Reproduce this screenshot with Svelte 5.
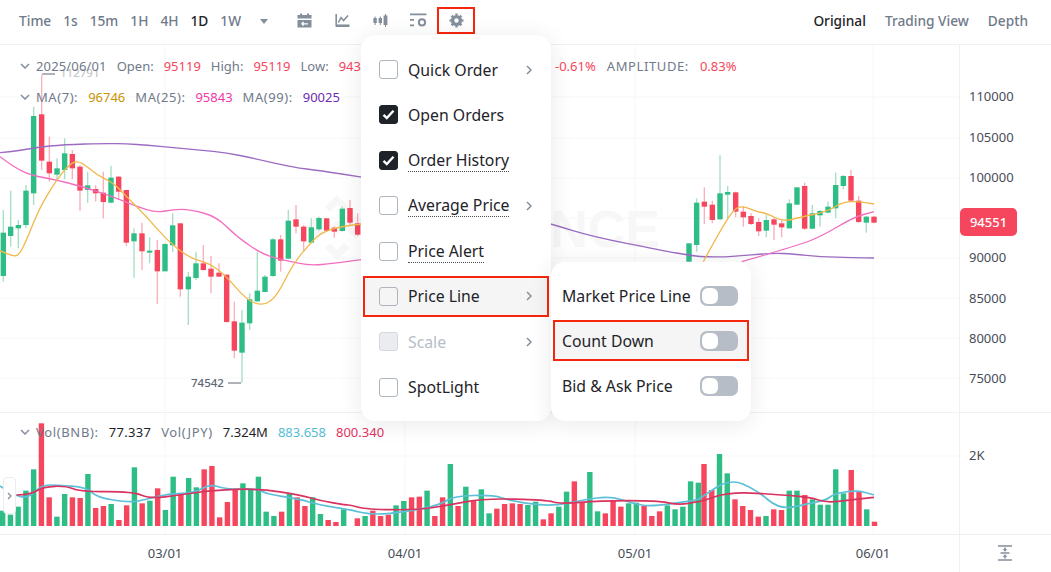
<script>
  // Smooth a polyline through its points with quadratic midpoints.
  const smooth = (pts, ox = 0, oy = 0) => {
    const p = pts.map(([x, y]) => [x / 3 + ox, y / 3 + oy]);
    let d = `M${p[0][0].toFixed(1)} ${p[0][1].toFixed(1)}`;
    for (let i = 1; i < p.length - 1; i++) {
      const mx = (p[i][0] + p[i + 1][0]) / 2;
      const my = (p[i][1] + p[i + 1][1]) / 2;
      d += ` Q${p[i][0].toFixed(1)} ${p[i][1].toFixed(1)} ${mx.toFixed(1)} ${my.toFixed(1)}`;
    }
    const l = p[p.length - 1];
    return d + ` L${l[0].toFixed(1)} ${l[1].toFixed(1)}`;
  };

  const leftCandles = [
    [10,330,545,398,528,'g'],[32,272,440,380,408,'g'],[55,360,445,375,385,'g'],[78,255,385,272,375,'g'],
    [101,20,315,48,280,'g'],[125,-75,210,43,182,'r'],[148,110,245,185,220,'r'],[171,175,240,205,224,'g'],
    [194,115,238,160,210,'g'],[217,150,238,162,205,'r'],[240,195,332,200,272,'r'],[263,215,308,256,270,'g'],
    [287,255,305,267,280,'r'],[310,215,355,278,306,'r'],[333,197,310,233,308,'g'],[356,228,300,230,275,'r'],
    [379,270,438,270,428,'r'],[402,385,533,400,424,'g'],[426,368,510,400,454,'r'],[449,412,490,452,458,'g'],
    [472,420,612,450,514,'r'],[495,430,514,432,514,'g'],[518,340,456,376,436,'g'],[541,370,590,370,568,'r'],
    [565,516,675,530,568,'g'],[588,455,540,490,534,'g'],[610,435,512,490,510,'r'],[633,468,580,506,530,'r'],
    [657,490,530,518,530,'r'],[680,524,668,524,666,'r'],[703,605,775,664,752,'r'],[726,630,848,668,758,'g'],
    [749,580,690,598,670,'g'],[772,455,606,572,604,'g'],[795,525,577,530,576,'g'],[819,415,530,418,528,'g'],
    [842,405,515,418,482,'r'],[865,330,478,362,476,'g'],[888,315,400,358,380,'r'],[911,375,455,380,424,'r'],
    [934,355,430,382,428,'g'],[957,350,392,354,388,'g'],[980,355,395,355,392,'r'],[1003,380,413,383,395,'r'],
    [1027,320,395,326,393,'g'],[1050,300,375,324,368,'r'],[1073,340,408,370,404,'r']
  ];
  const rightCandles = [
    [27,340,395,340,395,'g'],[50,205,365,218,345,'g'],[73,172,282,215,230,'r'],[97,212,280,224,270,'r'],
    [120,76,270,190,268,'g'],[143,168,268,186,194,'g'],[167,185,262,187,245,'r'],[190,228,290,245,262,'r'],
    [213,250,285,258,282,'r'],[236,265,318,276,304,'r'],[259,255,322,270,302,'g'],[282,262,330,268,284,'r'],
    [305,270,322,280,292,'r'],[328,208,295,220,295,'g'],[351,172,225,172,224,'g'],[374,158,300,168,296,'r'],
    [397,225,298,250,296,'g'],[420,240,290,243,256,'g'],[444,215,250,230,248,'g'],[467,128,265,165,235,'g'],
    [490,135,178,138,168,'g'],[513,120,212,138,212,'r'],[536,198,278,212,276,'r'],[559,258,308,260,278,'g'],
    [582,258,280,260,278,'r']
  ];
  const mapCandle = (ox, oy) => ([x, wt, wb, bt, bb, c]) => ({
    x: x / 3 + ox, wt: wt / 3 + oy, wb: wb / 3 + oy, bt: bt / 3 + oy, h: Math.max(2, (bb - bt) / 3), c
  });
  const candles = [...leftCandles.map(mapCandle(0, 100)), ...rightCandles.map(mapCandle(680, 130))];

  const page = (pts) => pts.map(([x, y]) => [x * 3, y * 3]);
  const purple = [
    smooth([[0,158],[60,152],[110,142],[190,134],[320,130],[380,132],[440,135],[520,143],[600,150],[680,158],[760,175],[880,202],[960,212],[1090,232]], 0, 100),
    smooth(page([[540,221],[551,224],[593,236.7],[660,250],[693,256],[707,257],[730,256.7],[773,253],[793,254],[820,256.7],[853,257.7],[874,258]]))
  ];
  const pink = [
    smooth([[0,170],[40,200],[90,225],[170,240],[240,258],[340,290],[410,320],[470,338],[520,328],[570,328],[650,350],[710,410],[790,465],[860,482],[930,497],[1000,490],[1090,478]], 0, 100),
    smooth([[185,395],[340,350],[420,322],[520,262],[582,245]], 680, 130)
  ];
  const yellow = [
    smooth([[0,452],[30,465],[55,470],[80,420],[120,320],[170,240],[210,190],[240,182],[290,225],[340,248],[380,290],[440,350],[500,420],[570,475],[630,490],[680,530],[740,600],[790,618],[830,590],[880,490],[940,420],[970,395],[1030,378],[1090,372]], 0, 100),
    smooth([[70,395],[130,285],[165,235],[190,228],[230,245],[260,250],[310,275],[360,262],[440,245],[490,215],[540,215],[582,222]], 680, 130)
  ];

  // Positive top = green bar, negative = red; values are read at 3x from y=410.
  const v1 = [302,314,290,242,178,-40,-262,320,252,-262,-264,192,-294,-288,282,-330,-286,172,-280,272,-235,300,200,-250,204,232,-178,-168,-322,-276,-240,220,240,200,305,318,-305,250,-262,-288,262,312,-330,-336,298];
  const v2 = [-325,318,-302,-318,-314,286,273,-262,-260,242,-318,-262,162,-288,230,-270,238,310,-296,-282,-280,-282,285,275,-328,-310,290,245,-214,-276,186,304,-310,-270,-290,280,278,-288,-318,-304,286,298,290,214,218];
  const v3 = [-162,-240,132,190,-268,-288,-300,-320,318,-298,-300,242,242,-255,268,284,284,178,250,-180,-245,298,-335];
  const bar = (base, ox) => (v, i) => {
    const t = Math.abs(v);
    return { x: (base + 23.25 * i) / 3 + ox - 2.7, y: 410 + t / 3, h: (348 - t) / 3, c: v < 0 ? 'r' : 'g' };
  };
  const bars = [...v1.map(bar(8, 0)), ...v2.map(bar(22, 350)), ...v3.map(bar(12, 700))];

  const vBlue = smooth([
    ...[[0,228],[40,255],[85,265],[125,225],[170,225],[260,232],[290,262],[390,278],[440,268],[510,250],[580,250],[630,222],[680,238],[770,236],[800,252],[900,268],[960,285],[1040,298]],
    ...[[0,300],[70,315],[170,305],[270,285],[310,258],[430,255],[480,272],[600,290],[700,270],[780,258],[850,280],[900,290],[1040,270]].map(([x, y]) => [x + 1050, y]),
    ...[[0,265],[90,205],[170,240],[240,300],[330,280],[380,270],[400,252],[470,240],[522,255]].map(([x, y]) => [x + 2100, y])
  ], 0, 410);
  const vRed = smooth([
    ...[[50,255],[90,255],[130,230],[200,228],[240,245],[400,245],[450,266],[540,255],[640,240],[780,236],[900,255],[960,272],[1040,285]],
    ...[[0,285],[50,298],[200,300],[300,285],[400,265],[590,270],[630,282],[750,272],[920,272],[990,285],[1040,275]].map(([x, y]) => [x + 1050, y]),
    ...[[0,275],[90,245],[250,255],[330,262],[380,278],[450,270],[522,262]].map(([x, y]) => [x + 2100, y])
  ], 0, 410);

  const gridY = [97, 138, 178, 218, 258, 298, 338, 378];
  const gridX = [165, 405, 635, 873];
  const ticks = [
    { y: 96, t: '110000' }, { y: 137, t: '105000' }, { y: 177, t: '100000' }, { y: 257, t: '90000' },
    { y: 298, t: '85000' }, { y: 338, t: '80000' }, { y: 378, t: '75000' }
  ];
  const times = [
    { x: 165, t: '03/01' }, { x: 405, t: '04/01' }, { x: 635, t: '05/01' }, { x: 873, t: '06/01' }
  ];
  const intervals = ['1s', '15m', '1H', '4H', '1D', '1W'];
  const menu = [
    { t: 'Quick Order', arrow: true },
    { t: 'Open Orders', on: true },
    { t: 'Order History', on: true, dot: true },
    { t: 'Average Price', arrow: true, dot: true },
    { t: 'Price Alert', dot: true },
    { t: 'Price Line', arrow: true, mark: true },
    { t: 'Scale', arrow: true, off: true },
    { t: 'SpotLight' }
  ];
  const sub = [{ t: 'Market Price Line' }, { t: 'Count Down', mark: true }, { t: 'Bid & Ask Price' }];
</script>

<div class="app">
  <header class="toolbar">
    <span class="tab">Time</span>
    {#each intervals as iv}
      <span class="tab" class:active={iv === '1D'}>{iv}</span>
    {/each}
    <svg class="caret" width="8" height="5" viewBox="0 0 8 5"><path d="M0 0h8L4 5z" /></svg>
    <div class="tools">
      <span class="tool">
        <svg width="15" height="15" viewBox="0 0 15 15"><path d="M3 0.5h2v1.5h5V0.5h2V2h2.5v3.5H.5V2H3z M.5 7h14v7.5H.5z" /><path class="cut" d="M11 10.8H5M6.6 9 4.8 10.8 6.6 12.6" /></svg>
      </span>
      <span class="tool">
        <svg width="15" height="15" viewBox="0 0 15 15"><path class="ln" d="M1.2 1v11.6H14" /><path class="ln" d="M3.4 9.5 6 4.6 8.6 7.6 13 2.4" /><path d="M1 11.6h13.5v2.4H1z" /></svg>
      </span>
      <span class="tool">
        <svg width="16" height="13" viewBox="0 0 16 13"><path d="M1.4 4h3.4v5H1.4zM2.6 2.5h1V11h-1zM6.6 4h3.4v5H6.6zM7.8 2.5h1V11h-1zM11.6 1.5h3.8v9.5h-3.8zM13 0h1v13h-1z" /></svg>
      </span>
      <span class="tool">
        <svg width="17" height="15" viewBox="0 0 17 15"><path d="M0 0.5h16.5v1.8H0zM0 6h4v1.8H0zM0 11.5h4v1.8H0z" /><circle class="ring" cx="12" cy="9.4" r="3.1" /></svg>
      </span>
      <span class="tool gear">
        <svg width="15" height="15" viewBox="0 0 15 15"><circle class="gear-body" cx="7.5" cy="7.5" r="3.9" /><circle class="gear-teeth" cx="7.5" cy="7.5" r="6.1" pathLength="48" /></svg>
      </span>
    </div>
    <nav class="views">
      <span class="tab active">Original</span>
      <span class="tab">Trading View</span>
      <span class="tab">Depth</span>
    </nav>
  </header>

  <section class="row main-row">
    <div class="plot">
      <svg class="canvas" width="959" height="367" viewBox="0 45 959 367">
        {#each gridY as y}<line class="grid" x1="0" x2="959" y1={y} y2={y} />{/each}
        {#each gridX as x}<line class="grid" x1={x} x2={x} y1="45" y2="412" />{/each}
        <g class="mark">
          <path d="M337 195l12 12-5 5-7-7-7 7-5-5zM337 260l12-12-5-5-7 7-7-7-5 5zM318 215l12 12-12 12-12-12zM356 215l12 12-12 12-12-12zM337 220l7 7-7 7-7-7z" />
          <text x="660" y="247" text-anchor="end">BINANCE</text>
        </g>
        {#each candles as c}
          <line class={c.c === 'g' ? 'wick-g' : 'wick-r'} x1={c.x} x2={c.x} y1={c.wt} y2={c.wb} />
          <rect class={c.c === 'g' ? 'up' : 'down'} x={c.x - 2.7} y={c.bt} width="5.4" height={c.h} />
        {/each}
        {#each purple as d}<path class="ma ma99" {d} />{/each}
        {#each pink as d}<path class="ma ma25" {d} />{/each}
        {#each yellow as d}<path class="ma ma7" {d} />{/each}
        <line class="ext" x1="42" x2="55" y1="74" y2="74" />
        <line class="ext" x1="228" x2="241" y1="383" y2="383" />
      </svg>
      <span class="extreme high">112791</span>
      <span class="extreme low">74542</span>
      <div class="legend first">
        <svg class="chev" width="10" height="6" viewBox="0 0 10 6"><path d="M1 1l4 4 4-4" /></svg>
        <span class="date">2025/06/01</span><span>Open:</span><b class="red">95119</b><span>High:</span><b class="red">95119</b><span>Low:</span><b class="red">94319</b>
      </div>
      <div class="legend second">
        <svg class="chev" width="10" height="6" viewBox="0 0 10 6"><path d="M1 1l4 4 4-4" /></svg>
        <span class="wide">MA(7):</span><b class="c7">96746</b><span class="wide">MA(25):</span><b class="c25">95843</b><span class="wide">MA(99):</span><b class="c99">90025</b>
      </div>
      <div class="legend third">
        <b class="red">-0.61%</b><span class="amp">AMPLITUDE:</span><b class="red">0.83%</b>
      </div>
    </div>
    <aside class="axis">
      {#each ticks as tick}
        <span class="tick" style="top:{tick.y - 45 - 9}px">{tick.t}</span>
      {/each}
      <span class="price-tag">94551</span>
    </aside>
  </section>

  <section class="row vol-row">
    <div class="plot">
      <svg class="canvas" width="959" height="121" viewBox="0 413 959 121">
        <line class="grid" x1="0" x2="959" y1="456" y2="456" />
        {#each gridX as x}<line class="grid" x1={x} x2={x} y1="413" y2="534" />{/each}
        {#each bars as b}
          <rect class={b.c === 'g' ? 'up' : 'down'} x={b.x} y={b.y} width="5.4" height={b.h} />
        {/each}
        <path class="ma vblue" d={vBlue} />
        <path class="ma vred" d={vRed} />
      </svg>
      <div class="legend vol">
        <svg class="chev" width="10" height="6" viewBox="0 0 10 6"><path d="M1 1l4 4 4-4" /></svg>
        <span class="wider">Vol(BNB):</span><b class="ink vnum">77.337</b><span class="wider">Vol(JPY)</span><b class="ink">7.324M</b><b class="cyan">883.658</b><b class="crim">800.340</b>
      </div>
      <div class="handle">
        <svg width="5" height="8" viewBox="0 0 5 8"><path d="M1 1l3 3-3 3" /></svg>
      </div>
    </div>
    <aside class="axis">
      <span class="tick" style="top:{455 - 413 - 9}px">2K</span>
    </aside>
  </section>

  <footer class="row time-row">
    <div class="times">
      {#each times as t}
        <span class="time" style="left:{t.x}px">{t.t}</span>
      {/each}
    </div>
    <div class="fit">
      <svg width="16" height="16" viewBox="0 0 16 16"><path class="fit-ln" d="M1 1h14M1 15h14M3.5 8h9" /><path d="M8 6.8 5.6 4.2h1.6V2.4h1.6v1.8h1.6zM8 9.2l2.4 2.6H8.8v1.8H7.2v-1.8H5.6z" /></svg>
    </div>
  </footer>

  <div class="menu">
    {#each menu as m}
      <div class="item" class:marked={m.mark} class:off={m.off}>
        <span class="box" class:on={m.on} class:box-off={m.off}>
          {#if m.on}<svg width="13" height="11" viewBox="0 0 13 11"><path d="M1.5 5.8 4.8 9 11.5 1.8" /></svg>{/if}
        </span>
        <span class="label" class:dotted={m.dot}>{m.t}</span>
        {#if m.arrow}
          <svg class="arrow" width="6" height="10" viewBox="0 0 6 10"><path d="M1 1l4 4-4 4" /></svg>
        {/if}
      </div>
    {/each}
  </div>

  <div class="submenu">
    {#each sub as s}
      <div class="item sub-item" class:marked={s.mark}>
        <span class="label">{s.t}</span>
        <span class="toggle"><span class="knob"></span></span>
      </div>
    {/each}
  </div>
</div>

<style>
  :global(body) { margin: 0; background: #fff; }
  .app {
    position: relative;
    width: 1051px;
    height: 572px;
    overflow: hidden;
    display: flex;
    flex-direction: column;
    background: #fff;
    font-family: "Noto Sans", "Open Sans", sans-serif;
    color: #1e2329;
  }

  .toolbar {
    display: flex;
    align-items: center;
    gap: 12px;
    height: 45px;
    flex: none;
    padding: 0 23px 3px 19px;
    box-sizing: border-box;
    border-bottom: 1px solid #eef0f2;
  }
  .tab { font-size: 13.7px; font-weight: 500; color: #707a8a; white-space: nowrap; line-height: 20px; }
  .tab.active { color: #1e2329; }
  .caret { margin-left: 7px; fill: #848e9c; margin-top: 2px; }
  .tools { display: flex; align-items: center; margin-left: 5px; }
  .tool { width: 38px; height: 27px; box-sizing: border-box; display: flex; align-items: center; justify-content: center; }
  .tool svg { fill: #848e9c; }
  .tool.gear { border: 2px solid #f5260c; }
  .cut { fill: none; stroke: #fff; stroke-width: 1.3; }
  .ln { fill: none; stroke: #848e9c; stroke-width: 1.6; }
  .ring { fill: none; stroke: #848e9c; stroke-width: 2; }
  .gear-body { fill: none; stroke: #848e9c; stroke-width: 3.4; }
  .gear-teeth { fill: none; stroke: #848e9c; stroke-width: 1.8; stroke-dasharray: 3 3; stroke-dashoffset: 1.5; }
  .views { margin-left: auto; display: flex; gap: 19px; }

  .row { display: flex; flex: none; }
  .main-row { height: 368px; border-bottom: 1px solid #f0f1f2; box-sizing: border-box; }
  .vol-row { height: 122px; border-bottom: 1px solid #eef0f2; box-sizing: border-box; }
  .time-row { height: 37px; }
  .plot { position: relative; width: 959px; flex: none; overflow: hidden; }
  .canvas { display: block; filter: blur(0.5px); }
  .axis { position: relative; flex: 1; border-left: 1px solid #eef0f2; }
  .tick { position: absolute; left: 9px; font-size: 13px; line-height: 18px; color: #474d57; }
  .price-tag {
    position: absolute;
    top: 163px;
    left: 0;
    width: 57px;
    height: 28px;
    border-radius: 5px;
    background: #f6465d;
    color: #fff;
    font-size: 13px;
    font-weight: 500;
    line-height: 28px;
    text-align: center;
  }

  .grid { stroke: #f6f7f8; stroke-width: 1; }
  .mark { fill: #f7f7f8; }
  .mark text { font-family: "Liberation Sans", sans-serif; font-weight: 700; font-size: 52px; }
  .up { fill: #2ebd85; }
  .down { fill: #f6465d; }
  .wick-g { stroke: #a8dfc6; stroke-width: 1.4; }
  .wick-r { stroke: #fbb1bb; stroke-width: 1.4; }
  .ma { fill: none; stroke-width: 1.3; }
  .ma7 { stroke: #f0b94a; }
  .ma25 { stroke: #f26fc0; }
  .ma99 { stroke: #9b6cc2; }
  .vblue { stroke: #5dc0d8; stroke-width: 1.7; }
  .vred { stroke: #d9335f; stroke-width: 1.7; }
  .ext { stroke: #5e6673; stroke-width: 1; }

  .extreme { position: absolute; font-size: 11.5px; font-weight: 500; line-height: 14px; color: #5e6673; }
  .high { left: 60px; top: 21px; color: #c4c7cc; }
  .low { left: 191px; top: 331px; }

  .legend {
    position: absolute;
    display: flex;
    align-items: center;
    gap: 10px;
    font-size: 13px;
    line-height: 18px;
    color: #707a8a;
    white-space: nowrap;
  }
  .legend b { font-weight: 400; }
  .first { left: 20px; top: 12px; }
  .second { left: 20px; top: 43px; }
  .third { left: 555px; top: 12px; gap: 11px; }
  .vol { left: 20px; top: 10px; }
  .chev { fill: none; stroke: #848e9c; stroke-width: 1.5; margin-right: -4px; }
  .date { letter-spacing: 0.15px; }
  .amp { letter-spacing: 0.6px; }
  .wide { letter-spacing: 0.55px; }
  .wider { letter-spacing: 0.65px; }
  .vnum { letter-spacing: 0.3px; }
  .red { color: #f6465d; }
  .c7 { color: #c99400; }
  .c25 { color: #f037a5; }
  .c99 { color: #6f2bb5; }
  .ink { color: #1e2329; }
  .cyan { color: #54bcd2; }
  .crim { color: #e2315c; }

  .handle {
    position: absolute;
    left: 3px;
    top: 64px;
    width: 13px;
    height: 37px;
    box-sizing: border-box;
    background: #fff;
    border: 1px solid #eaecef;
    border-radius: 4px;
    display: flex;
    align-items: center;
    justify-content: center;
  }
  .handle svg { fill: none; stroke: #848e9c; stroke-width: 1.2; }

  .times { position: relative; width: 959px; flex: none; }
  .time { position: absolute; top: 9px; transform: translateX(-50%); font-size: 13px; line-height: 18px; color: #474d57; }
  .fit { flex: 1; border-left: 1px solid #eef0f2; display: flex; align-items: flex-start; justify-content: center; padding: 10px 2px 0 0; box-sizing: border-box; }
  .fit svg { fill: #848e9c; }
  .fit-ln { fill: none; stroke: #848e9c; stroke-width: 1.4; }

  .menu, .submenu {
    position: absolute;
    box-sizing: border-box;
    background: #fff;
    border-radius: 14px;
    box-shadow: 0 3px 22px rgba(30, 35, 41, 0.1);
    display: flex;
    flex-direction: column;
  }
  .menu { left: 361px; top: 35px; width: 190px; height: 386px; padding: 14px 2px 12px; gap: 4.4px; }
  .submenu { left: 551px; top: 262px; width: 200px; height: 159px; padding: 13px 2px 14px; gap: 4.1px; justify-content: flex-start; }
  .item {
    position: relative;
    display: flex;
    align-items: center;
    height: 41px;
    flex: none;
    box-sizing: border-box;
    padding-left: 16px;
    font-size: 15.8px;
    color: #1e2329;
  }
  .item.marked { background: #f5f5f5; outline: 2px solid #f5260c; outline-offset: -2px; }
  .item.off { color: #b7bdc6; }
  .box {
    width: 19px;
    height: 19px;
    box-sizing: border-box;
    border: 1.5px solid #aeb4bc;
    border-radius: 3px;
    margin-right: 10px;
    display: flex;
    align-items: center;
    justify-content: center;
    flex: none;
  }
  .box.on { background: #1e2329; border-color: #1e2329; }
  .box.on svg { fill: none; stroke: #fff; stroke-width: 2.4; }
  .box.box-off { background: #eaecef; border-color: #d5d8dc; }
  .label { line-height: 22px; white-space: nowrap; }
  .dotted { border-bottom: 1px dotted #474d57; }
  .arrow { position: absolute; left: 163px; fill: none; stroke: #848e9c; stroke-width: 1.5; }
  .sub-item { padding-left: 9px; }
  .toggle {
    position: absolute;
    left: 147px;
    width: 38px;
    height: 20px;
    border-radius: 7px;
    background: #b7bdc6;
    display: flex;
    align-items: center;
    padding-left: 2px;
    box-sizing: border-box;
  }
  .knob { width: 16px; height: 16px; border-radius: 6px; background: #fff; }
</style>
